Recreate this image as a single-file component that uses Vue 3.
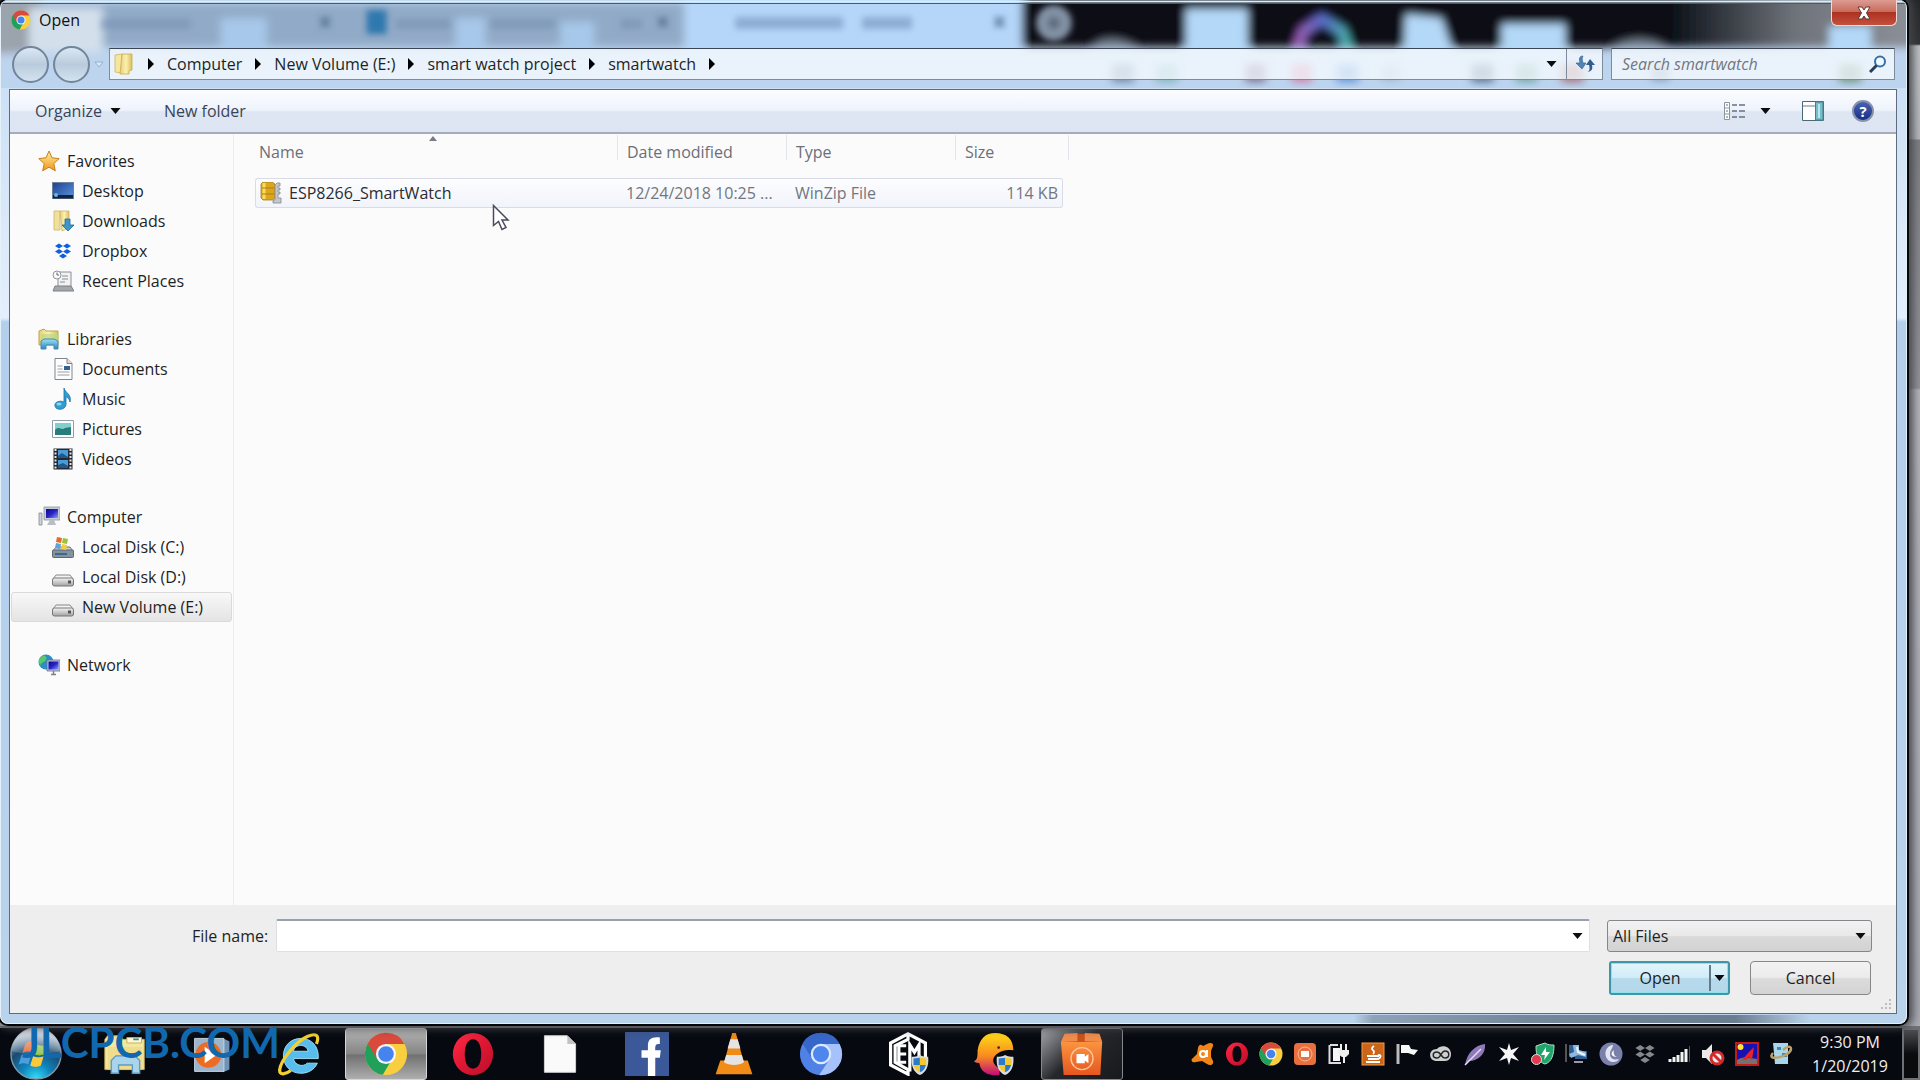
<script setup>
import { ref } from 'vue'

const fileName = ref('')
const search = ref('')
const fileType = ref('All Files')

const crumbs = ['Computer', 'New Volume (E:)', 'smart watch project', 'smartwatch']

const places = [
  {
    label: 'Favorites', icon: 'star',
    items: [
      { label: 'Desktop', icon: 'desktop' },
      { label: 'Downloads', icon: 'downloads' },
      { label: 'Dropbox', icon: 'dropbox-blue' },
      { label: 'Recent Places', icon: 'recent' },
    ],
  },
  {
    label: 'Libraries', icon: 'libraries',
    items: [
      { label: 'Documents', icon: 'document' },
      { label: 'Music', icon: 'music' },
      { label: 'Pictures', icon: 'picture' },
      { label: 'Videos', icon: 'video' },
    ],
  },
  {
    label: 'Computer', icon: 'computer',
    items: [
      { label: 'Local Disk (C:)', icon: 'disk-system' },
      { label: 'Local Disk (D:)', icon: 'disk' },
      { label: 'New Volume (E:)', icon: 'disk', selected: true },
    ],
  },
  { label: 'Network', icon: 'network', items: [] },
]

const files = [
  { name: 'ESP8266_SmartWatch', modified: '12/24/2018 10:25 ...', type: 'WinZip File', size: '114 KB' },
]

const apps = [
  { id: 'explorer', label: 'Windows Explorer' },
  { id: 'media', label: 'Media Player' },
  { id: 'ie', label: 'Internet Explorer' },
  { id: 'chrome', label: 'Google Chrome', state: 'active' },
  { id: 'opera', label: 'Opera' },
  { id: 'page', label: 'File' },
  { id: 'facebook', label: 'Facebook' },
  { id: 'vlc', label: 'VLC' },
  { id: 'chromium', label: 'Chromium' },
  { id: 'em', label: 'EM' },
  { id: 'bird', label: 'Bird' },
  { id: 'recorder', label: 'Recorder', state: 'running' },
]

const tray = ['avast', 'opera', 'chrome', 'rec', 'plug', 'java', 'flag', 'cloud', 'feather',
  'asterisk', 'shield', 'screens', 'torrent', 'dropbox-grey', 'signal', 'volume', 'paint', 'sync']
</script>

<template>
  <div class="screen">
    <svg class="sprite" width="0" height="0" aria-hidden="true">
      <defs>
        <linearGradient id="gGold" x1="0" y1="0" x2="0" y2="1"><stop offset="0" stop-color="#fff2a0" /><stop offset="1" stop-color="#f0941a" /></linearGradient>
        <linearGradient id="gFolder" x1="0" y1="0" x2="1" y2="0"><stop offset="0" stop-color="#e8d070" /><stop offset=".5" stop-color="#faf0b0" /><stop offset="1" stop-color="#dcbf58" /></linearGradient>
        <linearGradient id="gScreen" x1="0" y1="0" x2="1" y2="1"><stop offset="0" stop-color="#1d3f94" /><stop offset="1" stop-color="#5c96dd" /></linearGradient>
        <linearGradient id="gNavy" x1="0" y1="0" x2="1" y2="1"><stop offset="0" stop-color="#0b0b8c" /><stop offset=".5" stop-color="#2a22c8" /><stop offset="1" stop-color="#8f9cf2" /></linearGradient>
        <linearGradient id="gBlue" x1="0" y1="0" x2="0" y2="1"><stop offset="0" stop-color="#9be0f8" /><stop offset="1" stop-color="#2a86bd" /></linearGradient>
        <linearGradient id="gDisk" x1="0" y1="0" x2="0" y2="1"><stop offset="0" stop-color="#f4f4f4" /><stop offset="1" stop-color="#a2a2a2" /></linearGradient>
        <radialGradient id="gOrb" cx=".5" cy="1" r=".9"><stop offset="0" stop-color="#35e0fb" /><stop offset=".35" stop-color="#0f85bd" /><stop offset=".7" stop-color="#1b4a70" /><stop offset="1" stop-color="#8aa0b4" /></radialGradient>
        <linearGradient id="gGloss" x1="0" y1="0" x2="0" y2="1"><stop offset="0" stop-color="#fff" stop-opacity=".75" /><stop offset="1" stop-color="#fff" stop-opacity=".12" /></linearGradient>
        <linearGradient id="gOpera" x1="0" y1="0" x2="1" y2="1"><stop offset="0" stop-color="#ff2a45" /><stop offset=".5" stop-color="#df1733" /><stop offset="1" stop-color="#b80f2a" /></linearGradient>
        <linearGradient id="gBird" x1="0" y1="0" x2="0" y2="1"><stop offset="0" stop-color="#ffdc16" /><stop offset=".55" stop-color="#f88a20" /><stop offset="1" stop-color="#c20b7c" /></linearGradient>
        <linearGradient id="gBox" x1="0" y1="0" x2="0" y2="1"><stop offset="0" stop-color="#fb9340" /><stop offset="1" stop-color="#e6561f" /></linearGradient>
        <linearGradient id="gRainbow" x1="0" y1="0" x2="1" y2="0"><stop offset="0" stop-color="#a060b8" /><stop offset=".5" stop-color="#5b6fd0" /><stop offset="1" stop-color="#4fb5b0" /></linearGradient>
        <linearGradient id="gFade" x1="0" y1="0" x2="1" y2="0"><stop offset="0" stop-color="#070d15" /><stop offset=".72" stop-color="#0a0f16" /><stop offset=".86" stop-color="#6f737b" /><stop offset="1" stop-color="#8e9299" /></linearGradient>
        <filter id="soft" x="-20%" y="-20%" width="140%" height="140%"><feGaussianBlur stdDeviation="4" /></filter>
        <filter id="softer" x="-20%" y="-20%" width="140%" height="140%"><feGaussianBlur stdDeviation="3" /></filter>
      </defs>

      <symbol id="chrome" viewBox="0 0 48 48">
        <circle cx="24" cy="24" r="23" fill="#f9cf3f" />
        <path d="M24 24 4 12.500A23 23 0 0 0 20.500 46.700L31 29z" fill="#20a05a" />
        <path d="M24 13H44.200A23 23 0 0 0 4 12.500L14 29z" fill="#d94a3c" />
        <circle cx="24" cy="24" r="11" fill="#f4f4f4" /><circle cx="24" cy="24" r="8.500" fill="#4583ee" />
      </symbol>
      <symbol id="chromium" viewBox="0 0 48 48">
        <circle cx="24" cy="24" r="23" fill="#4f82e4" />
        <path d="M24 13H44.200A23 23 0 0 0 4 12.500L14 29z" fill="#3767cb" />
        <path d="M24 13H44.200A23 23 0 0 1 22 47L33.500 29.500z" fill="#a5c2fa" />
        <circle cx="24" cy="24" r="10" fill="#4f86ee" stroke="#dce9ff" stroke-width="2.500" />
      </symbol>
      <symbol id="star" viewBox="0 0 22 22"><path d="M11 1l3 6.800 7.200.800-5.400 5 1.500 7.200L11 17.200 4.700 20.800l1.500-7.200-5.400-5L8 7.800z" fill="url(#gGold)" stroke="#c77f1d" stroke-width="1" /></symbol>
      <symbol id="desktop" viewBox="0 0 22 22"><rect x=".5" y="2.500" width="21" height="16" fill="url(#gScreen)" stroke="#6f8299" /><path d="M1 15h20v3.500H1z" fill="#15233c" /><circle cx="4" cy="15" r="2" fill="#68b7d8" /></symbol>
      <symbol id="folder" viewBox="0 0 22 22"><path d="M2 2l7-1v19l-7-1z" fill="#f4e6a0" stroke="#cfb35c" stroke-width=".8" /><path d="M9 1h10v16l-3 1v3H7z" fill="url(#gFolder)" stroke="#c9a94e" stroke-width=".8" /></symbol>
      <symbol id="downloads" viewBox="0 0 22 22"><path d="M2 1h6v19H2z" fill="#f0e09a" stroke="#cdb66a" stroke-width=".8" /><path d="M8 1h9v17l-7 3z" fill="url(#gFolder)" stroke="#cdb66a" stroke-width=".8" /><path d="M13 9h5v6h4l-6 6-6-6h3z" fill="#3b96cc" stroke="#1e689d" stroke-width=".8" /></symbol>
      <symbol id="boxes" viewBox="0 0 22 22"><path d="M3 6l4-2.500L11 6 7 8.500zM11 6l4-2.500L19 6l-4 2.500zM3 11.500L7 9l4 2.500L7 14zM11 11.500L15 9l4 2.500-4 2.500zM7 16l4-2.500 4 2.500-4 2.500z" /></symbol>
      <symbol id="dropbox-blue" viewBox="0 0 22 22"><use href="#boxes" fill="#0f5fe0" width="22" height="22" /></symbol>
      <symbol id="dropbox-grey" viewBox="1 1 20 20"><use href="#boxes" fill="#85878a" width="22" height="22" /></symbol>
      <symbol id="recent" viewBox="0 0 22 22"><path d="M6 2h13v15H6z" fill="#f2f2f2" stroke="#8b8e92" /><path d="M10 6h6M10 9h6M8 12h5" stroke="#8b8e92" /><circle cx="5" cy="5" r="4" fill="#fafafa" stroke="#92969b" /><path d="M5 2.500V5h2" fill="none" stroke="#666" /><path d="M3 16h16l3 5H1z" fill="#a4a7ab" stroke="#7d8084" /></symbol>
      <symbol id="libraries" viewBox="0 0 22 22"><path d="M1 3l5-2 2 2h12v14H1z" fill="url(#gFolder)" stroke="#b9a550" /><path d="M3 6h18v6H3z" fill="#b9d889" opacity=".7" /><path d="M3 21v-8l3-2h10l4 2v8h-4v-4H8v4z" fill="url(#gBlue)" stroke="#4889ad" /></symbol>
      <symbol id="document" viewBox="0 0 22 22"><path d="M3 .5h12l5 5v16H3z" fill="#fdfdfd" stroke="#80868c" /><path d="M15 .5v5h5" fill="#ddd" stroke="#80868c" /><path d="M5.500 8h5M5.500 11h5M5.500 14h12M5.500 17h12" stroke="#999fa6" /><path d="M12 8h6v4h-6z" fill="#336095" /></symbol>
      <symbol id="music" viewBox="0 0 22 22"><path d="M12 0c1 5 8 6 6 14-1-4-3-5-4-5v8c-1 5-10 6-11 1-1-4 5-6 9-4z" fill="#309ed2" stroke="#1a70a3" stroke-width=".8" /><ellipse cx="7" cy="16" rx="2.500" ry="1.500" fill="#8ed4f0" /></symbol>
      <symbol id="picture" viewBox="0 0 22 22"><path d="M.5 2.500h21v17H.5z" fill="#fff" stroke="#8ba0ad" /><path d="M3 5h16v12H3z" fill="#84cfcc" /><path d="M3 12c4-5 6 1 10-2l6-1v8H3z" fill="#277c7c" /></symbol>
      <symbol id="video" viewBox="0 0 22 22"><path d="M1.500.5h19v21h-19z" fill="#222932" /><path d="M6 2h10v8H6zM6 12h10v8H6z" fill="#4b9cd6" /><path d="M6 8l4-3 6 4v1H6zM6 17l5-2 5 3v2H6z" fill="#21588a" /><path d="M3.500 1v20M18.500 1v20" stroke="#e6e6e6" stroke-width="2" stroke-dasharray="2 1.500" /></symbol>
      <symbol id="computer" viewBox="0 0 22 22"><path d="M6 1h16v13H6z" fill="#c6ccd4" stroke="#8d949d" stroke-width=".8" /><path d="M8 3h12v9H8z" fill="url(#gNavy)" /><path d="M12 14h4l2 5H9z" fill="#b9bec5" /><path d="M1 7h3v12H1z" fill="#cfd3d6" stroke="#858b90" stroke-width=".8" /></symbol>
      <symbol id="disk" viewBox="0 0 22 22"><path d="M4 9h14l3 4H1z" fill="#f3f3f3" stroke="#888" /><rect x=".5" y="12" width="21" height="8" rx="2" fill="url(#gDisk)" stroke="#777" /><path d="M16 14.500h3v3h-3z" fill="#555" /></symbol>
      <symbol id="disk-system" viewBox="0 0 22 22"><path d="M4 11h14l3 4H1z" fill="#c6ced3" stroke="#777" /><rect x=".5" y="14" width="21" height="7.500" rx="1" fill="#85939c" stroke="#5d6870" /><path d="M5 1l5 1-1 5-5-1z" fill="#e56b2c" /><path d="M11 2l5 1-1 5-5-1z" fill="#9cc23b" /><path d="M4 7l5 1-1 5-5-1z" fill="#5da4dc" /><path d="M10 8l5 1-1 5-5-1z" fill="#f5cd3b" /><path d="M3 18h12" stroke="#346b94" stroke-width="2" /></symbol>
      <symbol id="network" viewBox="0 0 22 22"><circle cx="8" cy="8" r="7.500" fill="#2a8fc4" /><path d="M3 3c3-3 7 0 5 3s-5 2-5 5c-3-2-3-6 0-8z" fill="#5bc76c" /><path d="M9 6h13v11H9z" fill="#bcc4e0" stroke="#666e92" stroke-width=".8" /><path d="M10.500 7.500h10v8h-10z" fill="url(#gNavy)" /><path d="M13 20.500h5M15.500 17v3" stroke="#7c828a" stroke-width="1.500" /></symbol>
      <symbol id="zip" viewBox="0 0 22 22"><path d="M3 0h9l3 2v14l-3 2H3l-2-2V2z" fill="#dba51c" stroke="#a57d1e" stroke-width=".8" /><path d="M4 1v16" stroke="#f7dc62" stroke-width="3" /><path d="M2 6h12M2 12h12" stroke="#b07f12" /><path d="M17 1h3v3h-2v2h2v2h-2v2h2v2h-2v4h3v5h-8v-3h2V3z" fill="#c5c7ca" stroke="#85888c" stroke-width=".8" /></symbol>

      <symbol id="orb" viewBox="0 0 54 54">
        <circle cx="27" cy="27" r="26" fill="url(#gOrb)" stroke="#8198aa" stroke-width="1.500" />
        <path d="M16 16c4-3 7-2 10 0l-3 10c-3-2-6-2-10 0z" fill="#e8622a" /><path d="M28 17c4 2 7 2 11 0l-3 10c-4 2-7 2-11 0z" fill="#8fc043" />
        <path d="M12 28c4-2 7-2 10 0l-3 10c-3-2-6-2-10 0z" fill="#4b9fe0" /><path d="M24 29c4 2 7 2 11 0l-3 10c-4 2-7 2-11 0z" fill="#fbc838" />
        <path d="M2 24A25 25 0 0 1 52 24C42 28 12 28 2 24z" fill="url(#gGloss)" />
      </symbol>
      <symbol id="explorer" viewBox="0 0 48 48"><path d="M2 8l3-4h14l3 4h23v33H2z" fill="#f4e7a0" stroke="#c4ad55" /><path d="M26 6h16v6H26z" fill="#fff8d0" stroke="#c4ad55" /><path d="M33 8h6" stroke="#2b91a8" stroke-width="2" /><path d="M5 16h38v25H5z" fill="#f0dd8c" /><path d="M9 45V31l5-5h21l5 5v14h-8v-9H17v9z" fill="#a9d4ec" stroke="#5c9bc2" stroke-width="1.500" /></symbol>
      <symbol id="media" viewBox="0 0 48 48"><path d="M36 7l7 3v31l-7 3z" fill="#6e93b6" /><path d="M5 7h32v36H5z" fill="#9db5cc" stroke="#c9dae8" /><circle cx="20" cy="25" r="14" fill="#ed6c22" /><path d="M16 16l13 9-13 9z" fill="#fff" /></symbol>
      <symbol id="ie" viewBox="0 0 48 48"><path d="M26 7c-11 0-19 8-19 19s8 19 19 19c8 0 15-4 18-11H33c-5 5-14 2-15-5h27C46 16 38 7 26 7zM18 21c1-8 14-9 16 0z" fill="#58bdec" stroke="#a4e3fb" /><path d="M43 13C47 3 42 1 33 5 20 11 4 31 3 41c-1 7 7 5 12 1" fill="none" stroke="#f2cf32" stroke-width="3.500" /></symbol>
      <symbol id="opera" viewBox="0 0 48 48"><path fill-rule="evenodd" d="M24 1a22 23 0 1 0 0 46 22 23 0 0 0 0-46zm0 7c6 0 9 7 9 16s-3 16-9 16-9-7-9-16 3-16 9-16z" fill="url(#gOpera)" /></symbol>
      <symbol id="page" viewBox="0 0 48 48"><path d="M7 4h25l9 9v31H7z" fill="#fafafa" stroke="#d8d8d8" /><path d="M32 4v9h9z" fill="#c2c2c2" /></symbol>
      <symbol id="facebook" viewBox="0 0 48 48"><path d="M0 0h48v48H0z" fill="#3b5998" /><path d="M25 48V28h-7v-8h7v-5c0-7 4-10 13-9v7c-5 0-5 1-5 7h6l-1 8h-5v20z" fill="#fff" /></symbol>
      <symbol id="vlc" viewBox="0 0 48 48"><path d="M9 31h30l5 15H4z" fill="#f28c16" /><path d="M22 1h4l9 33c-6 4-16 4-22 0z" fill="#f18a18" /><path d="M20 8h8l3 10H17zM15.500 25h17l2.500 8c-6 4-16 4-22 0z" fill="#e4e4e4" /></symbol>
      <symbol id="uac" viewBox="0 0 20 24"><path d="M10 1c3 2 6 2 9 2 1 10-2 17-9 20C3 20 0 13 1 3c3 0 6 0 9-2z" fill="#d9dcdf" /><path d="M10 4v8H3V5zM10 12h6.500c-1 4-3 7-6.500 8z" fill="#2a7bcc" /><path d="M10 4l7 1v7h-7zM3.200 12H10v8c-4-2-6-4-6.800-8z" fill="#f3c92e" /></symbol>
      <symbol id="em" viewBox="0 0 48 48"><path d="M24 3v5L10 15v18l14 8v5L5 36V12L24 2l19 10v19" fill="none" stroke="#fff" stroke-width="3.500" /><path d="M22 15h-8v18h8M14 24h8M26 43V14l5 8 5-8v15" fill="none" stroke="#fff" stroke-width="3.500" /><use href="#uac" x="27" y="24" width="20" height="24" /></symbol>
      <symbol id="bird" viewBox="0 0 48 48"><path d="M1 32c4-2 4-5 4-12C7 7 14 1 24 1c13 0 20 7 20 19-7-1-13 0-18 4-7 6-4 12 3 16v7C17 48 8 44 7 34c-2 0-4 0-6-2z" fill="url(#gBird)" /><circle cx="28" cy="17" r="1.500" fill="#4a2a14" /><use href="#uac" x="25" y="24" width="20" height="24" /></symbol>
      <symbol id="recorder" viewBox="0 0 48 48"><path d="M5 2h38l3 9H1z" fill="#c9521d" /><path d="M5 2l14-1v9L1 11zM43 2L27 1v9l19 1z" fill="#f08d4c" /><path d="M1 11h45l-2 36H4z" fill="url(#gBox)" /><circle cx="24" cy="29" r="12" fill="none" stroke="#ffc69a" stroke-width="1.500" /><path d="M18 24h9v3l4-3v10l-4-3v3h-9z" fill="#fff" /></symbol>

      <symbol id="avast" viewBox="0 0 24 24"><path d="M12 4l4-2c3-2 7-1 6 2l-2 5v6l2 4c1 4-3 5-6 3l-5-3-6 1c-4 1-6-2-3-4l4-4 1-6c1-4 3-4 5-2z" fill="#f48418" /><circle cx="12" cy="12" r="3" fill="none" stroke="#fff" stroke-width="2" /><path d="M16 8v7" stroke="#fff" stroke-width="2" /></symbol>
      <symbol id="rec" viewBox="0 0 24 24"><rect x="1" y="1" width="22" height="22" rx="4" fill="#e86f40" /><circle cx="12" cy="12" r="7" fill="none" stroke="#ffb88e" /><path d="M8 9h8v6H8z" fill="#fff" /></symbol>
      <symbol id="plug" viewBox="0 0 24 24"><path d="M3 3h8M2.500 3v18H14" fill="none" stroke="#ddd" stroke-width="2" /><path d="M6 6h7v13H6z" fill="#f5f5f5" /><path d="M11 8h11v4l-3 3h-4l-4-3z" fill="#eee" /><path d="M14 2v6M19 2v6M17 14v7" stroke="#eee" stroke-width="2" /></symbol>
      <symbol id="java" viewBox="0 0 24 24"><rect x="1" y="1" width="22" height="22" fill="#cd6519" stroke="#f59b4a" /><path d="M13 4c-6 4 3 4-1 8M6 14h12M7 17h10M5 20h14M17 13c4-1 3 4-1 4" fill="none" stroke="#fff" stroke-width="1.800" /></symbol>
      <symbol id="flag" viewBox="0 0 24 24"><path d="M3 2v20" stroke="#bbb" stroke-width="3" /><path d="M6 3h8l2 4 7 1-4 5-6-2H6z" fill="#f7f7f7" /></symbol>
      <symbol id="cloud" viewBox="0 0 24 24"><path d="M7 19c-8-1-8-12 1-12C12 2 22 4 22 12c0 4-2 7-6 7z" fill="#cfcfcf" /><path d="M8 16c-5 0-5-6 0-6 4 0 4 6 8 6 5 0 5-7 0-7-4 0-4 7-8 7z" fill="none" stroke="#20252a" stroke-width="1.500" /></symbol>
      <symbol id="feather" viewBox="0 0 24 24"><path d="M2 23C4 11 12 3 22 2c1 10-7 17-16 17z" fill="#8f79b8" /><path d="M2 23L18 7" stroke="#e8e0f5" stroke-width="1.500" /></symbol>
      <symbol id="asterisk" viewBox="0 0 24 24"><path d="M12 1l2 7 8-3-6 7 6 7-8-3-2 7-2-7-8 3 6-7-6-7 8 3z" fill="#f6f6f6" /></symbol>
      <symbol id="shield" viewBox="0 0 24 24"><path d="M14 1c3 2 6 2 9 2 0 9-2 17-9 19C7 20 5 13 5 4z" fill="#20a56b" stroke="#b9d9ca" /><path d="M15 5l-5 8h4l-1 5 6-8h-4z" fill="#fff" /><circle cx="5.500" cy="17.500" r="5" fill="#df3a4d" stroke="#ddd" /></symbol>
      <symbol id="screens" viewBox="0 0 24 24"><path d="M1 2v18" stroke="#555" stroke-width="2" /><path d="M4 3h10v12H4zM10 9h12v8H10z" fill="#2d5f94" /><path d="M8 3h6v5l7 2v5l-8-2-7 3-2-4 5-2z" fill="#8fb8dc" /><path d="M12 5l1 5 7 3" fill="none" stroke="#eef6fc" stroke-width="2" /><path d="M9 20h9" stroke="#99a" stroke-width="2" /></symbol>
      <symbol id="torrent" viewBox="0 0 24 24"><circle cx="12" cy="12" r="11.500" fill="#7b80aa" /><path d="M14 3C4 4 4 19 14 20c3 0 5-1 6-3-3 1-9 1-9-5 0-4 3-6 3-9z" fill="#e2e4f2" /><path d="M15 8c-4 3-3 7 3 7-3-1-4-4-3-7z" fill="#fff" /></symbol>
      <symbol id="signal" viewBox="0 0 24 24"><path d="M3 20v-3M7 20v-5M11 20v-7M15 20V10M19 20V7" stroke="#f4f4f4" stroke-width="3" /><path d="M22.500 20V4" stroke="#555" /></symbol>
      <symbol id="volume" viewBox="0 0 24 24"><path d="M1 8h4l6-6v20l-6-6H1z" fill="#e9e9e9" /><circle cx="16" cy="16" r="6" fill="#e9e9e9" stroke="#d52a2a" stroke-width="3" /><path d="M12 12l8 8" stroke="#d52a2a" stroke-width="3" /></symbol>
      <symbol id="paint" viewBox="0 0 24 24"><path d="M1 1h22v22H1z" fill="#1611b0" stroke="#c31a1a" stroke-width="2" /><path d="M2 18c7-4 12-2 20-1v5H2z" fill="#77706f" /><circle cx="5.500" cy="5" r="3" fill="#ffe23a" /><path d="M19 5l-5 5-7 8h4l3-3 3 3 1-7z" fill="#ee2222" /></symbol>
      <symbol id="sync" viewBox="0 0 24 24"><path d="M4 1h15v21H6z" fill="#a9d6ea" /><path d="M8 5h4v3H8zM13 11h5v4h-5z" fill="#3f88ab" /><path d="M4 11c-8 9 17 4 18-4 0-4-5-2-8 1" fill="none" stroke="#bda268" stroke-width="2.500" /></symbol>
    </svg>

    <main class="dialog">
      <svg class="glass" viewBox="0 0 1907 88" preserveAspectRatio="none" aria-hidden="true">
        <rect width="1907" height="88" fill="#bdd4ee" />
        <g filter="url(#soft)">
          <rect x="-10" y="3" width="700" height="44" fill="#91aac7" />
          <rect x="-10" y="-5" width="50" height="58" fill="#9ba3ad" />
          <rect x="28" y="8" width="74" height="44" fill="#d3e0ec" />
          <path d="M220 18h46v34h-46zM455 18h30v34h-30zM560 22h34v30h-34z" fill="#a7c8ea" />
          <rect x="684" y="-8" width="338" height="60" fill="#b5d6f9" />
          <rect x="1022" y="-9" width="900" height="56" fill="url(#gFade)" />
          <path d="M1186 9h62v45h-62zM1406 14l36 4 12 36h-50zM1502 24h64v30h-64zM1830 26h42v28h-42z" fill="#b4d8f8" />
          <path d="M1090 48q18-18 50 0zM1610 48q30-18 60 0z" fill="#75808f" />
          <path d="M1298 47l6-16 18-12 20 12 6 16" fill="none" stroke="url(#gRainbow)" stroke-width="10" />
          <path d="M1112 64h22v18h-22z" fill="#6f88a8" /><path d="M1156 64h22v18h-22z" fill="#83b5bb" /><path d="M1246 64h20v18h-20z" fill="#7e708f" />
          <path d="M1292 64h20v18h-20z" fill="#cf80a5" /><path d="M1337 64h22v18h-22z" fill="#6294d6" /><path d="M1382 66h18v14h-18z" fill="#9fb3c6" /><path d="M1472 64h22v18h-22z" fill="#54708f" />
          <path d="M1516 64h22v18h-22z" fill="#76a5a5" /><path d="M1562 64h22v18h-22z" fill="#a3707c" /><path d="M1652 66h18v14h-18z" fill="#8199b5" /><path d="M1840 64h22v18h-22z" fill="#6e917f" />
        </g>
        <g filter="url(#softer)">
          <rect x="366" y="10" width="20" height="24" fill="#2f78ae" />
          <circle cx="1054" cy="23" r="18" fill="#8292a4" /><circle cx="1054" cy="23" r="6" fill="#5a6a7c" />
          <path d="M100 24h90M395 24h55M490 24h65M620 24h22" stroke="#708cad" stroke-width="10" opacity=".5" />
          <path d="M320 17l9 10M329 17l-9 10M658 17l9 10M667 17l-9 10M995 17l9 10M1004 17l-9 10" stroke="#536f90" stroke-width="3" />
          <path d="M735 23h108M862 23h50" stroke="#7d9dc2" stroke-width="12" opacity=".7" />
        </g>
        <path d="M0 1.500h1907" stroke="#d5effc" stroke-width="2" /><path d="M0 3.500h1907" stroke="#49586a" />
      </svg>

      <header class="titlebar">
        <svg class="title-icon"><use href="#chrome" /></svg>
        <h1>Open</h1>
      </header>
      <button class="close" type="button" aria-label="Close">
        <svg width="14" height="14" viewBox="0 0 14 14"><path d="M1 1h4l2 3 2-3h4L9.500 7l3.500 6H9l-2-3-2 3H1l3.500-6z" fill="#fff" stroke="#5b3a3a" /></svg>
      </button>

      <div class="navbar">
        <button class="round" type="button" aria-label="Back"></button>
        <button class="round" type="button" aria-label="Forward"></button>
        <svg class="history" width="10" height="7" viewBox="0 0 10 7"><path d="M1 1h8L5 6z" fill="#dcebf8" stroke="#8fb2d2" /></svg>
        <nav class="address" aria-label="Address">
          <svg class="icon"><use href="#folder" /></svg>
          <svg class="chev" viewBox="0 0 6 12"><path d="M0 0l6 6-6 6z" /></svg>
          <template v-for="crumb in crumbs" :key="crumb">
            <a href="#">{{ crumb }}</a>
            <svg class="chev" viewBox="0 0 6 12"><path d="M0 0l6 6-6 6z" /></svg>
          </template>
          <svg class="caret push" viewBox="0 0 10 6"><path d="M0 0h10L5 6z" /></svg>
          <button class="refresh" type="button" aria-label="Refresh">
            <svg width="20" height="18" viewBox="0 0 20 18"><path d="M8 1C4 1 4 4 5 8H1l6 6 4-6H8C7 5 7 3 8 1z" fill="#5085b8" stroke="#2e5c8c" stroke-width=".6" /><path d="M11 17c4 0 4-3 3-7h-3l4-6 5 6h-3c1 4 0 7-6 7z" fill="#335d8e" /></svg>
          </button>
        </nav>
        <div class="search">
          <input v-model="search" type="text" placeholder="Search smartwatch" aria-label="Search smartwatch" />
          <svg width="18" height="18" viewBox="0 0 18 18"><circle cx="11" cy="6.500" r="5" fill="#eef8ff" stroke="#366fa6" stroke-width="2" /><path d="M7.500 10.500L1 17" stroke="#263c59" stroke-width="3" /></svg>
        </div>
      </div>

      <section class="panel">
        <div class="toolbar">
          <button type="button">Organize <svg class="caret" viewBox="0 0 10 6"><path d="M0 0h10L5 6z" /></svg></button>
          <button type="button">New folder</button>
          <button class="view" type="button" aria-label="Change view">
            <svg width="22" height="18" viewBox="0 0 22 18"><path d="M1.500.5h5v17h-5zM1.500 6h5M1.500 12h5" fill="#fff" stroke="#8c949f" /><path d="M9 3h5M16 3h6M9 9h5M16 9h6M9 15h5M16 15h6" stroke="#667080" stroke-width="1.500" /><path d="M3 3h2M3 9h2M3 15h2" stroke="#69717b" /></svg>
            <svg class="caret" viewBox="0 0 10 6"><path d="M0 0h10L5 6z" /></svg>
          </button>
          <button class="preview" type="button" aria-label="Preview pane">
            <svg width="22" height="20" viewBox="0 0 22 20"><path d="M.5.5h21v19H.5z" fill="#fff" stroke="#4c6878" /><path d="M1 5h12" stroke="#687f8c" /><path d="M13.500 1h7.500v18h-7.500z" fill="#76bcc9" stroke="#47808d" /><path d="M17 3v14" stroke="#b7e6ec" stroke-width="2" /></svg>
          </button>
          <button class="help" type="button" aria-label="Help">?</button>
        </div>

        <div class="content">
          <nav class="sidebar" aria-label="Places">
            <div v-for="group in places" :key="group.label" class="group">
              <a href="#" class="place head"><svg class="icon"><use :href="'#' + group.icon" /></svg>{{ group.label }}</a>
              <a v-for="item in group.items" :key="item.label" href="#" class="place" :class="{ selected: item.selected }">
                <svg class="icon"><use :href="'#' + item.icon" /></svg>{{ item.label }}
              </a>
            </div>
          </nav>
          <div class="files">
            <table>
              <thead>
                <tr>
                  <th class="c-name">Name<svg class="sort" viewBox="0 0 8 5"><path d="M0 5l4-5 4 5z" fill="#777c84" /></svg></th>
                  <th class="c-date">Date modified</th>
                  <th class="c-type">Type</th>
                  <th class="c-size">Size</th>
                </tr>
              </thead>
              <tbody>
                <tr v-for="file in files" :key="file.name">
                  <td class="name"><span><svg class="icon"><use href="#zip" /></svg>{{ file.name }}</span></td>
                  <td>{{ file.modified }}</td>
                  <td>{{ file.type }}</td>
                  <td class="size">{{ file.size }}</td>
                </tr>
              </tbody>
            </table>
          </div>
        </div>

        <form class="footer" @submit.prevent>
          <div class="line">
            <label for="file-name">File name:</label>
            <div class="combo">
              <input id="file-name" v-model="fileName" type="text" />
              <svg class="caret" viewBox="0 0 10 6"><path d="M0 0h10L5 6z" /></svg>
            </div>
            <div class="filter">
              <select v-model="fileType" aria-label="File type"><option>All Files</option></select>
              <svg class="caret" viewBox="0 0 10 6"><path d="M0 0h10L5 6z" /></svg>
            </div>
          </div>
          <div class="line actions">
            <div class="split">
              <button type="submit">Open</button>
              <button class="more" type="button" aria-label="Open options"><svg class="caret" viewBox="0 0 10 6"><path d="M0 0h10L5 6z" /></svg></button>
            </div>
            <button class="cancel" type="button">Cancel</button>
          </div>
          <svg class="grip" width="12" height="12" viewBox="0 0 12 12"><path d="M8 0h2v2H8zM4 4h2v2H4zM8 4h2v2H8zM0 8h2v2H0zM4 8h2v2H4zM8 8h2v2H8z" fill="#bdbdbd" /></svg>
        </form>
      </section>
    </main>

    <footer class="taskbar">
      <button class="start" type="button" aria-label="Start"><svg><use href="#orb" /></svg></button>
      <button v-for="app in apps" :key="app.id" type="button" class="app" :class="app.state" :aria-label="app.label">
        <svg><use :href="'#' + app.id" /></svg>
      </button>
      <div class="tray">
        <svg v-for="item in tray" :key="item"><use :href="'#' + item" /></svg>
      </div>
      <time class="clock" datetime="2019-01-20T21:30">9:30 PM<br />1/20/2019</time>
      <button class="show-desktop" type="button" aria-label="Show desktop"></button>
    </footer>

    <div class="watermark">JLCPCB.COM</div>
    <svg class="cursor" width="18" height="28" viewBox="0 0 18 28"><path d="M1.500 1.500v20l5-4 3.500 8 4-2-4-7.500h6z" fill="#fff" stroke="#4a4d5c" stroke-width="1.500" /></svg>
  </div>
</template>

<style>
html, body { margin: 0; background: #000; }
</style>

<style scoped>
.screen {
  position: relative;
  display: flex;
  flex-direction: column;
  min-height: 100vh;
  overflow: hidden;
  font-family: "Open Sans", "Noto Sans", sans-serif;
  font-size: 16px;
  line-height: 20px;
  color: #1d1f24;
  background: linear-gradient(#242527 0, #303133 44px, #c2c5c8 46px, #b9bbbf 139px, #808185 140px, #94949a 388px, #b7b7c0 390px, #aaaab2 100%);
}
.screen * { box-sizing: border-box; }
.sprite { position: absolute; }
button, input, select { font: inherit; color: inherit; margin: 0; }
button { padding: 0; border: 0; background: none; }
a { color: inherit; text-decoration: none; }
.icon { width: 22px; height: 22px; flex: none; }
.caret { width: 11px; height: 6px; flex: none; fill: #0c0c0e; }

.dialog {
  position: relative;
  flex: 1;
  display: flex;
  flex-direction: column;
  margin: 0 13px 2px 0;
  padding: 0 9px 9px 8px;
  border: 1px solid #e4f1fb;
  border-top: 0;
  border-radius: 8px;
  background:
    linear-gradient(90deg, transparent 71%, #8fa3b8 72%, #74879b 80%, #6a7c90 91%, transparent 95%) bottom / 100% 8px no-repeat,
    linear-gradient(#c5daf2 0, #e3effc 318px, #b3cfec 322px, #bad3ec 100%);
  box-shadow: 0 0 0 2px #050608, 2px 0 10px 4px #44464b;
}
.glass { position: absolute; top: 0; left: 0; width: 100%; height: 88px; border-radius: 8px 8px 0 0; }
.titlebar { position: relative; display: flex; align-items: center; gap: 8px; height: 39px; padding-left: 2px; }
.title-icon { width: 20px; height: 20px; }
h1 { margin: 0; font-size: 16px; font-weight: 400; color: #111; }
.close {
  position: absolute;
  top: 0;
  right: 9px;
  display: grid;
  place-items: center;
  width: 66px;
  height: 26px;
  border: 1px solid #f6d8d2;
  border-top: 0;
  border-radius: 0 0 6px 6px;
  background: linear-gradient(#dc9c92 0, #c9695b 48%, #ad3121 50%, #c4513c 100%);
}
.navbar { position: relative; display: flex; align-items: center; gap: 4px; height: 50px; padding: 0 2px 0 3px; }
.round {
  flex: none;
  width: 37px;
  height: 37px;
  border: 2px solid #71859b;
  border-radius: 50%;
  background: linear-gradient(#dbe8f4, #b9cbdc 50%, #d3e2ef);
}
.history { flex: none; margin-right: 1px; }
.address, .search {
  display: flex;
  align-items: center;
  height: 32px;
  border: 1px solid #7d8b9c;
  border-top-color: #3b4756;
  background: rgba(246, 251, 255, .78);
}
.address { flex: 1; gap: 13px; margin-right: 4px; padding-left: 3px; }
.chev { width: 6px; height: 12px; flex: none; }
.push { margin-left: auto; }
.address .push { margin-right: -4px; }
.refresh { display: grid; place-items: center; width: 36px; height: 30px; border-left: 1px solid #7d8b9c; }
.search { width: 284px; padding: 0 7px 0 10px; }
.search input { flex: 1; min-width: 0; padding: 0; border: 0; outline: 0; background: none; font-style: italic; }
.search input::placeholder { color: #73777f; opacity: 1; }

.panel { position: relative; flex: 1; display: flex; flex-direction: column; border: 1px solid #5f6c7d; background: #fbfbfc; }
.toolbar {
  display: flex;
  align-items: center;
  height: 44px;
  padding: 0 22px 0 25px;
  border-bottom: 2px solid #a3adbd;
  background: linear-gradient(#fbfdff 0, #eef3fc 48%, #dee6f3 52%, #dce5f1 100%);
  color: #3a4457;
}
.toolbar button { display: flex; align-items: center; gap: 8px; }
.toolbar button + button { margin-left: 43px; }
.toolbar .view { margin-left: auto; gap: 15px; }
.toolbar .view + .preview { margin-left: 31px; }
.toolbar .preview + .help {
  justify-content: center;
  width: 22px;
  height: 22px;
  margin-left: 28px;
  border: 2px solid #8793ab;
  border-radius: 50%;
  background: linear-gradient(#4864b4, #172f87);
  color: #fff;
  font-size: 15px;
  font-weight: 700;
}

.content { flex: 1; display: flex; }
.sidebar { width: 224px; padding: 12px 1px 0; border-right: 1px solid #e9edf4; }
.group { margin-bottom: 28px; }
.place {
  display: flex;
  align-items: center;
  gap: 8px;
  height: 30px;
  padding-left: 40px;
  border: 1px solid transparent;
  border-radius: 3px;
  white-space: nowrap;
}
.place.head { gap: 7px; padding-left: 26px; }
.place.selected { border-color: #dadada; background: linear-gradient(#f8f8f8, #e4e4e4); }
.files { flex: 1; padding-left: 21px; }
table { width: 808px; table-layout: fixed; border-collapse: separate; border-spacing: 0; }
th {
  position: relative;
  height: 44px;
  padding: 0 0 0 9px;
  line-height: 36px;
  font-weight: 400;
  text-align: left;
  vertical-align: top;
  color: #6b6f78;
}
th::after { content: ""; position: absolute; top: 1px; right: 0; width: 1px; height: 25px; background: #e2e5ea; }
.c-name { width: 363px; padding-left: 4px; }
.c-date, .c-type { width: 169px; }
.c-size::after { right: -6px; }
.sort { position: absolute; top: 2px; left: 174px; width: 8px; height: 5px; }
td {
  height: 30px;
  padding: 0 0 0 8px;
  border: 1px solid #d9dce8;
  border-width: 1px 0;
  background: linear-gradient(#fdfdff, #f1f4fb);
  color: #73767e;
  white-space: nowrap;
}
td:first-child { padding-left: 4px; border-left-width: 1px; border-radius: 3px 0 0 3px; }
td:last-child { padding-right: 4px; border-right-width: 1px; border-radius: 0 3px 3px 0; text-align: right; }
td span { display: flex; align-items: center; gap: 7px; color: #2b2c31; }

.footer { position: relative; height: 108px; padding: 14px 24px 0 182px; background: #eee; }
.line { display: flex; align-items: center; height: 33px; }
.line label { flex: none; margin-right: 8px; white-space: nowrap; }
.combo { flex: 1; display: flex; align-items: center; height: 33px; padding-right: 6px; border: 1px solid #dcdfe4; border-top: 2px solid #989fae; border-radius: 2px; background: #fff; }
.combo input { flex: 1; min-width: 0; height: 28px; border: 0; outline: 0; background: none; }
.filter { position: relative; width: 265px; margin-left: 17px; }
.filter select {
  display: block;
  width: 100%;
  height: 32px;
  padding: 0 5px;
  appearance: none;
  border: 1px solid #83868a;
  border-radius: 3px;
  background: linear-gradient(#f2f2f2 0, #e9e9e9 48%, #dadada 52%, #d2d2d2 100%);
}
.filter .caret { position: absolute; top: 13px; right: 6px; pointer-events: none; }
.actions { justify-content: flex-end; gap: 20px; margin-top: 9px; padding-right: 1px; }
.split { display: flex; align-items: center; width: 121px; height: 34px; border: 2px solid #3d97a8; border-radius: 3px; background: linear-gradient(#e4f4fb 0, #d2ecf8 48%, #b6daec 52%, #b4d8ea 100%); box-shadow: inset 0 0 0 1px #8fe0f0; }
.split button { flex: 1; height: 26px; }
.split .more { flex: none; display: grid; place-items: center; width: 19px; border-left: 2px solid #607c8a; }
.cancel { width: 121px; height: 34px; border: 1px solid #85878a; border-radius: 4px; background: linear-gradient(#f3f3f3 0, #ebebeb 48%, #dcdcdc 52%, #d3d3d3 100%); }
.grip { position: absolute; right: 3px; bottom: 2px; }

.taskbar { display: flex; align-items: center; gap: 5px; height: 54px; border-top: 2px solid #70737a; background: #060910; }
.start { flex: none; width: 70px; height: 52px; margin-right: 9px; padding-left: 2px; }
.start svg { display: block; width: 52px; height: 52px; margin: 0 auto; }
.app { display: grid; place-items: center; flex: none; width: 82px; height: 52px; border: 1px solid transparent; border-radius: 3px; }
.app svg { width: 44px; height: 44px; }
.app.active { border-color: #d6d6d6; background: linear-gradient(#b4b4b4, #858585 50%, #707070 52%, #aeaeae); }
.app.running { border-color: #85888d; background: linear-gradient(135deg, #a2a4a7 0, #25272b 45%, #17191d 100%); }
.tray { display: flex; gap: 10px; margin-left: auto; }
.tray svg { width: 24px; height: 24px; }
.clock { width: 104px; line-height: 24px; text-align: center; color: #eee; }
.show-desktop { flex: none; width: 18px; height: 52px; margin-left: -5px; border: 2px solid #6e7074; background: linear-gradient(#4b4d51, #0a0b0d 50%); }

.watermark {
  position: absolute;
  left: 22px;
  bottom: 10px;
  font-family: Lato, "Open Sans", sans-serif;
  font-size: 42px;
  font-weight: 700;
  line-height: 56px;
  color: #1268ae;
  pointer-events: none;
}
.cursor { position: absolute; top: 204px; left: 492px; pointer-events: none; }
</style>
